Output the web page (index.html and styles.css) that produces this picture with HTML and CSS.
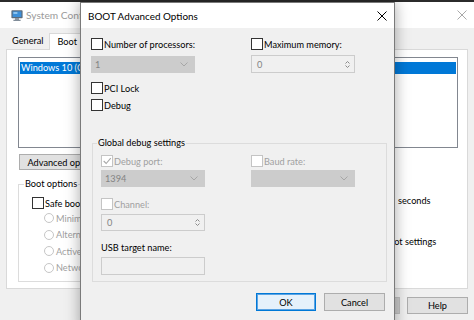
FILE: index.html
```html
<!DOCTYPE html>
<html lang="en">
<head>
    <meta charset="UTF-8">
    <meta name="viewport" content="width=device-width, initial-scale=1.0">
    <title>BOOT Advanced Options</title>
    <link rel="stylesheet" href="styles.css">
</head>
<body>
    <div class="desktop">

        <!-- background window -->
        <div class="window sysconfig">
            <div class="titlebar">
                <svg class="app-icon" viewBox="0 0 15 15">
                    <rect x="0.5" y="1.5" width="14" height="10" rx="1" fill="#5b6a7a"/>
                    <rect x="2" y="3" width="11" height="7" fill="#3d8fd8"/>
                    <rect x="3" y="4" width="5" height="2" fill="#9fd0f5"/>
                    <rect x="5" y="11.5" width="5" height="2" fill="#7b8794"/>
                    <rect x="3" y="13.5" width="9" height="1.2" fill="#5b6a7a"/>
                </svg>
                <span class="title">System Configuration</span>
                <span class="close inactive">
                    <svg viewBox="0 0 10 10"><path d="M0.5 0.5L9.5 9.5M9.5 0.5L0.5 9.5"/></svg>
                </span>
            </div>
            <div class="window-body">
                <div class="tabs">
                    <span class="tab">General</span>
                    <span class="tab active">Boot</span>
                </div>
                <div class="tab-panel">
                    <div class="os-list">
                        <div class="os-item selected">Windows 10 (C:\WINDOWS) : Current OS; Default OS</div>
                    </div>
                    <div class="panel-buttons">
                        <button class="btn wide">Advanced options...</button>
                    </div>
                    <div class="boot-row">
                        <fieldset class="group boot-options">
                            <legend>Boot options</legend>
                            <div class="boot-cols">
                                <div class="check"><span class="box"></span>Safe boot</div>
                                <div class="radios">
                                    <div class="radio"><span class="dot"></span>Minimal</div>
                                    <div class="radio"><span class="dot"></span>Alternate shell</div>
                                    <div class="radio"><span class="dot"></span>Active Directory repair</div>
                                    <div class="radio"><span class="dot"></span>Network</div>
                                </div>
                            </div>
                        </fieldset>
                        <div class="timeout">
                            <div class="timeout-row">
                                <span class="textbox"></span>
                                <span>seconds</span>
                            </div>
                            <div class="check permanent"><span class="box"></span><span class="wrap-label">Make all boot settings permanent</span></div>
                        </div>
                    </div>
                </div>
                <div class="window-buttons">
                    <button class="btn" disabled></button>
                    <button class="btn">Help</button>
                </div>
            </div>
        </div>

        <!-- foreground dialog -->
        <div class="window dialog">
            <div class="titlebar">
                <span class="title">BOOT Advanced Options</span>
                <span class="close">
                    <svg viewBox="0 0 10 10"><path d="M0.5 0.5L9.5 9.5M9.5 0.5L0.5 9.5"/></svg>
                </span>
            </div>
            <div class="dialog-body">
                <div class="options">
                    <div class="col-left">
                        <div class="check"><span class="box"></span>Number of processors:</div>
                        <div class="combo first">
                            <span>1</span>
                            <svg class="chev" viewBox="0 0 8 5"><path d="M0.5 0.5L4 4L7.5 0.5"/></svg>
                        </div>
                        <div class="check pci"><span class="box"></span>PCI Lock</div>
                        <div class="check debug"><span class="box"></span>Debug</div>
                    </div>
                    <div class="col-right">
                        <div class="check"><span class="box"></span>Maximum memory:</div>
                        <div class="spin first">
                            <span>0</span>
                            <svg class="arrows" viewBox="0 0 5 9"><path d="M0.5 3.5L2.5 1.5L4.5 3.5M0.5 5.5L2.5 7.5L4.5 5.5"/></svg>
                        </div>
                    </div>
                </div>

                <fieldset class="group debug-settings">
                    <legend>Global debug settings</legend>
                    <div class="group-body">
                        <div class="col-left">
                            <div class="check disabled"><span class="box"><svg viewBox="0 0 12 12"><path d="M2 6L5 9L10.5 2.5"/></svg></span>Debug port:</div>
                            <div class="combo">
                                <span>1394</span>
                                <svg class="chev" viewBox="0 0 8 5"><path d="M0.5 0.5L4 4L7.5 0.5"/></svg>
                            </div>
                            <div class="check disabled channel"><span class="box"></span>Channel:</div>
                            <div class="spin">
                                <span>0</span>
                                <svg class="arrows" viewBox="0 0 5 9"><path d="M0.5 3.5L2.5 1.5L4.5 3.5M0.5 5.5L2.5 7.5L4.5 5.5"/></svg>
                            </div>
                            <div class="field-label">USB target name:</div>
                            <div class="textbox usb"></div>
                        </div>
                        <div class="col-right">
                            <div class="check disabled"><span class="box"></span>Baud rate:</div>
                            <div class="combo">
                                <span></span>
                                <svg class="chev" viewBox="0 0 8 5"><path d="M0.5 0.5L4 4L7.5 0.5"/></svg>
                            </div>
                        </div>
                    </div>
                </fieldset>

                <div class="dialog-buttons">
                    <button class="btn default">OK</button>
                    <button class="btn">Cancel</button>
                </div>
            </div>
        </div>

    </div>
</body>
</html>
```

FILE: styles.css
```css
* {
    box-sizing: border-box;
}

body {
    margin: 0;
    background-color: #2b2b2b;
    font-family: Lato, "Noto Sans", sans-serif;
    font-size: 9.2px;
    color: #000;
    overflow: hidden;
}

.desktop {
    position: relative;
    width: 474px;
    height: 320px;
    overflow: hidden;
}

.window {
    position: absolute;
    top: 2px;
    background-color: #f0f0f0;
}

.titlebar {
    display: flex;
    align-items: center;
    height: 26px;
    background-color: #fff;
}

.title {
    flex: 1;
    font-size: 9.9px;
    white-space: nowrap;
}

.close {
    display: flex;
    justify-content: center;
    align-items: center;
}

.close svg {
    width: 10px;
    height: 10px;
    stroke: #000;
    stroke-width: 1;
    fill: none;
}

.close.inactive svg {
    stroke: #a8a8a8;
}

.btn {
    height: 17px;
    width: 61px;
    padding: 0;
    font-family: inherit;
    font-size: 9.2px;
    color: #000;
    background-color: #e1e1e1;
    border: 1px solid #adadad;
}

.btn:disabled {
    color: #a0a0a0;
    background-color: #ccc;
    border-color: #bfbfbf;
}

/* ---- System Configuration (behind) ---- */

.sysconfig {
    left: 0;
    width: 480px;
    height: 330px;
}

.sysconfig .titlebar {
    padding-left: 11px;
}

.sysconfig .title {
    color: #9a9a9a;
    font-size: 10.2px;
}

.sysconfig .close {
    width: 36px;
}

.app-icon {
    width: 12px;
    height: 12px;
    margin-right: 3px;
}

.window-body {
    padding: 5px 12px 0 6px;
}

.tabs {
    display: flex;
    height: 16px;
    align-items: center;
}

.tab {
    padding: 0 5px 0 6px;
    line-height: 16px;
}

.tab.active {
    background-color: #fff;
    border: 1px solid #d9d9d9;
    border-bottom: none;
    line-height: 15px;
    height: 17px;
    margin-top: -1px;
    margin-bottom: -1px;
    padding: 0 9px 0 8px;
    position: relative;
}

.tab-panel {
    height: 240px;
    background-color: #fff;
    border: 1px solid #d9d9d9;
    padding: 7px 9px 0 11px;
}

.os-list {
    height: 91px;
    border: 1px solid #828790;
    background-color: #fff;
    padding: 4px 1px;
}

.os-item {
    line-height: 12px;
    padding-left: 1px;
    white-space: nowrap;
}

.os-item.selected {
    background-color: #0078d7;
    color: #fff;
}

.panel-buttons {
    display: flex;
    gap: 6px;
    margin: 6px 0 0 1px;
}

.btn.wide {
    width: 96px;
    height: 16px;
}

.boot-row {
    display: flex;
    gap: 10px;
    margin-top: 8px;
}

.group {
    margin: 0;
    padding: 0;
    border: 1px solid #dcdcdc;
}

.group legend {
    margin-left: 5px;
    padding: 0 1px;
    line-height: 12px;
}

.boot-options {
    width: 312px;
    height: 104px;
}

.boot-cols {
    padding: 7px 0 0 13px;
}

.radios {
    display: flex;
    flex-direction: column;
    gap: 4.6px;
    margin: 3px 0 0 12px;
}

.radio {
    display: flex;
    align-items: center;
    gap: 2px;
    height: 12px;
    color: #a0a0a0;
    white-space: nowrap;
}

.dot {
    width: 10px;
    height: 10px;
    border: 1px solid #c6c6c6;
    border-radius: 50%;
    background-color: #fff;
}

.timeout {
    padding-top: 13px;
}

.timeout-row {
    display: flex;
    align-items: center;
    gap: 6px;
}

.timeout-row .textbox {
    width: 52px;
    height: 18px;
    background-color: #fff;
    border: 1px solid #7a7a7a;
}

.permanent {
    margin-top: 33px;
    margin-left: -5px;
    align-items: flex-start;
    height: auto;
}

.wrap-label {
    width: 92px;
    line-height: 12px;
    white-space: normal;
}

.window-buttons {
    display: flex;
    justify-content: flex-end;
    gap: 7px;
    margin-top: 8px;
}

/* ---- checkboxes ---- */

.check {
    display: flex;
    align-items: center;
    gap: 1px;
    height: 12px;
    white-space: nowrap;
}

.box {
    flex: none;
    width: 12px;
    height: 12px;
    border: 1px solid #333;
    background-color: #fff;
}

.box svg {
    display: block;
    width: 10px;
    height: 10px;
    stroke: #a8a8a8;
    stroke-width: 1.3;
    fill: none;
}

.check.disabled {
    color: #a0a0a0;
}

.check.disabled .box {
    border-color: #c4c4c4;
}

/* ---- BOOT Advanced Options (front) ---- */

.dialog {
    left: 80px;
    width: 315px;
    height: 330px;
    border: 1px solid #7a7a7a;
    box-shadow: 0 0 14px rgba(0, 0, 0, 0.35);
}

.dialog .titlebar {
    height: 25px;
    padding-left: 7px;
}

.dialog .close {
    width: 24px;
}

.dialog-body {
    padding: 10px 9px 0 10px;
}

.options {
    display: flex;
}

.options .col-left {
    width: 160px;
}

.combo,
.spin,
.textbox.usb {
    width: 104px;
    height: 17px;
    display: flex;
    align-items: center;
    justify-content: space-between;
    color: #838383;
}

.combo {
    margin-top: 3px;
    padding: 0 6px 0 3px;
    background-color: #ccc;
    border: 1px solid #ccc;
}

.combo.first {
    margin-top: 6px;
}

.chev {
    width: 8px;
    height: 5px;
    stroke: #a6a6a6;
    stroke-width: 1;
    fill: none;
}

.spin {
    margin-top: 4px;
    padding: 0 4px 0 5px;
    background-color: #f0f0f0;
    border: 1px solid #ccc;
}

.spin.first {
    margin-top: 5px;
    height: 18px;
}

.arrows {
    width: 5px;
    height: 9px;
    stroke: #8a8a8a;
    stroke-width: 1;
    fill: none;
}

.check.pci {
    margin-top: 9px;
}

.check.debug {
    margin-top: 5px;
}

.debug-settings {
    width: 295px;
    margin: 26px 0 0 1px;
}

.debug-settings legend {
    margin-left: 4px;
}

.group-body {
    display: flex;
    padding: 6px 0 6px 8px;
}

.group-body .col-left {
    width: 150px;
}

.check.channel {
    margin-top: 11px;
}

.field-label {
    margin-top: 11px;
    line-height: 12px;
}

.textbox.usb {
    margin-top: 3px;
    height: 18px;
    background-color: #f0f0f0;
    border: 1px solid #ccc;
}

.dialog-buttons {
    display: flex;
    justify-content: flex-end;
    gap: 8px;
    margin-top: 11px;
}

.dialog-buttons .btn {
    height: 18px;
}

.btn.default {
    width: 60px;
    background-color: #e5f1fb;
    border: 1px solid #0078d7;
    box-shadow: inset 0 0 0 1px #5aa3e3;
}
```
